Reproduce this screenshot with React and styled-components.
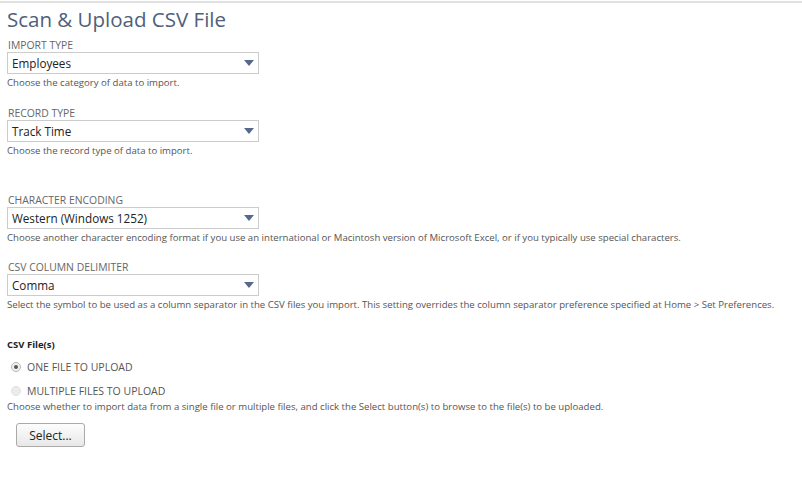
import styled, { createGlobalStyle } from "styled-components";

const GlobalStyle = createGlobalStyle`
  body {
    margin: 0;
    background: #fff;
    font-family: "Open Sans", "Liberation Sans", sans-serif;
  }
`;

const Page = styled.div`
  width: 802px;
  height: 483px;
  border-top: 2px solid #e0e0e0;
  margin-top: 1px;
  box-sizing: border-box;
  padding: 4px 7px 0;
`;

const Title = styled.h1`
  margin: 0 0 8px;
  font-size: 20.5px;
  font-weight: 400;
  color: #4f607a;
  line-height: 24px;
`;

const Field = styled.div`
  display: flex;
  flex-direction: column;
  margin-bottom: ${(p) => p.$gap || 0}px;
`;

const Label = styled.div`
  font-size: 10.4px;
  line-height: 13px;
  color: #666;
  text-transform: uppercase;
  padding-left: 1px;
`;

const SelectBox = styled.div`
  width: 252px;
  height: 22px;
  box-sizing: border-box;
  border: 1px solid #ccc;
  display: flex;
  align-items: center;
  justify-content: space-between;
  padding: 0 4px 0 4px;
  font-size: 11.7px;
  color: #222;
`;

const Help = styled.div`
  font-size: 9.6px;
  line-height: 13px;
  color: #555;
  margin-top: 2px;
  white-space: nowrap;
`;

const Section = styled.div`
  margin-top: ${(p) => p.$top}px;
`;

const SectionTitle = styled.div`
  font-size: 9.5px;
  font-weight: 700;
  color: #222;
  line-height: 13px;
  margin-bottom: 4px;
`;

const RadioRow = styled.label`
  display: flex;
  align-items: center;
  gap: 6px;
  height: 24px;
  padding-left: 4px;
  font-size: 10.5px;
  color: #555;
  text-transform: uppercase;
`;

const RadioDot = styled.span`
  width: 10px;
  height: 10px;
  border-radius: 50%;
  box-sizing: border-box;
  border: 1px solid ${(p) => (p.$checked ? "#b5b5b5" : "#e0e0e0")};
  background: ${(p) => (p.$checked ? "#f2f2f2" : "#ececec")};
  display: flex;
  align-items: center;
  justify-content: center;

  &::after {
    content: "";
    width: 4px;
    height: 4px;
    border-radius: 50%;
    background: ${(p) => (p.$checked ? "#555" : "transparent")};
  }
`;

const RadioHelp = styled(Help)`
  margin-top: -3px;
`;

const Button = styled.button`
  margin: 10px 0 0 9px;
  width: 69px;
  height: 24px;
  border: 1px solid #aaa;
  border-radius: 3px;
  background: linear-gradient(#fdfdfd, #e8e8e8);
  font-family: inherit;
  font-size: 12px;
  color: #222;
  padding: 0;
`;

const Arrow = () => (
  <svg width="10" height="6" viewBox="0 0 10 6">
    <path d="M0.3 0 H9.7 Q10 0 9.8 0.3 L5 6 L0.2 0.3 Q0 0 0.3 0 Z" fill="#55698b" />
  </svg>
);

const fields = [
  { label: "Import Type", value: "Employees", help: "Choose the category of data to import.", gap: 18 },
  { label: "Record Type", value: "Track Time", help: "Choose the record type of data to import.", gap: 37 },
  {
    label: "Character Encoding",
    value: "Western (Windows 1252)",
    help: "Choose another character encoding format if you use an international or Macintosh version of Microsoft Excel, or if you typically use special characters.",
    gap: 17,
  },
  {
    label: "CSV Column Delimiter",
    value: "Comma",
    help: "Select the symbol to be used as a column separator in the CSV files you import. This setting overrides the column separator preference specified at Home > Set Preferences.",
    gap: 0,
  },
];

const App = () => {
  return (
    <>
      <GlobalStyle />
      <Page>
        <Title>Scan &amp; Upload CSV File</Title>
        {fields.map((f) => (
          <Field key={f.label} $gap={f.gap}>
            <Label>{f.label}</Label>
            <SelectBox>
              <span>{f.value}</span>
              <Arrow />
            </SelectBox>
            <Help>{f.help}</Help>
          </Field>
        ))}

        <Section $top={27}>
          <SectionTitle>CSV File(s)</SectionTitle>
          <RadioRow>
            <RadioDot $checked />
            One file to upload
          </RadioRow>
          <RadioRow>
            <RadioDot />
            Multiple files to upload
          </RadioRow>
          <RadioHelp>
            Choose whether to import data from a single file or multiple files, and click the Select button(s) to browse to the file(s) to be uploaded.
          </RadioHelp>
          <Button>Select...</Button>
        </Section>
      </Page>
    </>
  );
};

export default App;
